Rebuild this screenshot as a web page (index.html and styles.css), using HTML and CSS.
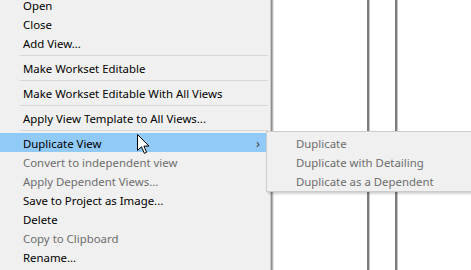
FILE: index.html
```html
<!DOCTYPE html>
<html>
<head>
<meta charset="utf-8">
<link rel="stylesheet" href="styles.css">
</head>
<body>
<div class="screen">
  <div class="menu">
    <div class="item">Open</div>
    <div class="item">Close</div>
    <div class="item">Add View...</div>
    <div class="sep"></div>
    <div class="item">Make Workset Editable</div>
    <div class="sep"></div>
    <div class="item">Make Workset Editable With All Views</div>
    <div class="sep"></div>
    <div class="item">Apply View Template to All Views...</div>
    <div class="sep"></div>
    <div class="item active">Duplicate View<span class="chev">&#x203A;</span></div>
    <div class="item disabled">Convert to independent view</div>
    <div class="item disabled">Apply Dependent Views...</div>
    <div class="item">Save to Project as Image...</div>
    <div class="item">Delete</div>
    <div class="item disabled">Copy to Clipboard</div>
    <div class="item">Rename...</div>
  </div>
  <div class="canvas">
    <div class="gap1"></div>
    <div class="vline"></div>
    <div class="gap2"></div>
    <div class="vline"></div>
  </div>
  <div class="submenu">
    <div class="item disabled">Duplicate</div>
    <div class="item disabled">Duplicate with Detailing</div>
    <div class="item disabled">Duplicate as a Dependent</div>
  </div>
  <svg class="cursor" width="14" height="21" viewBox="0 0 14 21">
    <path d="M0.5 0.5 L0.5 16.5 L4.5 12.8 L7.3 19.3 L9.6 18.3 L6.9 12.1 L12 12.1 Z" fill="#fff" stroke="#000" stroke-width="1" stroke-linejoin="miter"/>
  </svg>
</div>
</body>
</html>
```
FILE: styles.css
```css
html, body {
  margin: 0;
  padding: 0;
  background: #fff;
}
.screen {
  position: relative;
  width: 471px;
  height: 270px;
  overflow: hidden;
  display: flex;
  font-family: "Noto Sans", "Open Sans", sans-serif;
  font-size: 11.4px;
  color: #000;
}
.menu {
  width: 270px;
  flex: none;
  background: #f0f0f0;
  margin-top: -5px;
  display: flex;
  flex-direction: column;
}
.item {
  height: 16px;
  line-height: 16px;
  padding-top: 3px;
  padding-left: 23px;
  white-space: nowrap;
  position: relative;
}
.item.disabled {
  color: #6d6d6d;
}
.item.active {
  background: #91c9f7;
  margin-right: 4px;
}
.chev {
  position: absolute;
  left: 256px;
  top: 2px;
  color: #444;
  font-size: 13px;
}
.sep {
  height: 6px;
  display: flex;
  align-items: center;
  padding-left: 20px;
  padding-right: 2px;
}
.sep::before {
  content: "";
  display: block;
  flex: 1;
  height: 1px;
  background: #d7d7d7;
}
.canvas {
  flex: 1;
  display: flex;
  background: #fff;
  border-left: 1px solid #c8c8c8;
  box-shadow: inset 1px 0 0 #8f8f8f, inset 2px 0 0 #b8b8b8, inset 3px 0 0 #e4e4e4;
}
.gap1 {
  width: 96px;
  flex: none;
}
.gap2 {
  width: 26px;
  flex: none;
}
.vline {
  width: 2px;
  flex: none;
  background: #7c7c7c;
  box-shadow: 1px 0 0 #c4c4c4;
}
.submenu {
  position: absolute;
  left: 266px;
  top: 131px;
  width: 210px;
  background: #f0f0f0;
  border: 1px solid #cccccc;
  padding: 1px 0;
  box-shadow: 2px 2px 2px rgba(0,0,0,0.18);
}
.submenu .item {
  padding-left: 29px;
}
.cursor {
  position: absolute;
  left: 137px;
  top: 134px;
}
```
